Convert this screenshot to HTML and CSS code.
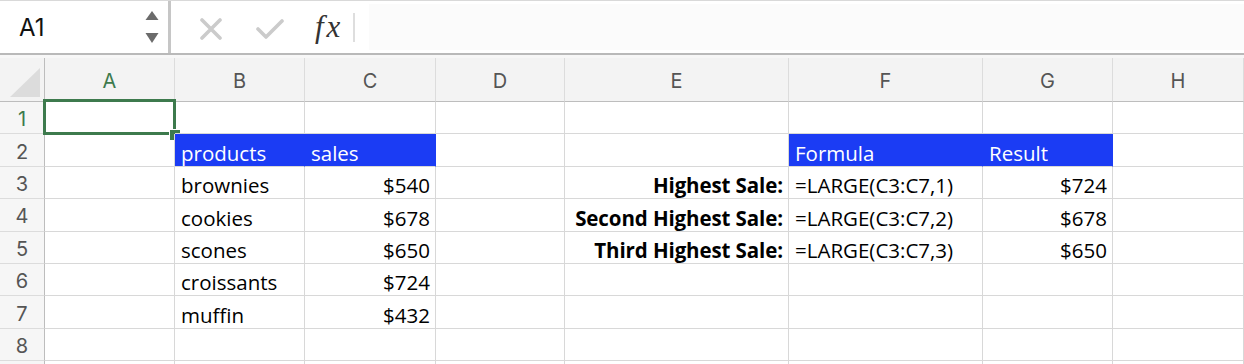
FILE: index.html
```html
<!DOCTYPE html>
<html lang="en">
<head>
  <meta charset="UTF-8" />
  <title>LARGE function</title>
  <link rel="stylesheet" href="styles.css">
</head>
<body>
  <div class="formula-bar">
    <div class="name-box">
      <span class="ref">A1</span>
      <svg class="spin" width="14" height="34" viewBox="0 0 14 34">
        <polygon points="7,0 13.5,9 0.5,9" fill="#6b6b6b"/>
        <polygon points="0.5,22 13.5,22 7,32" fill="#6b6b6b"/>
      </svg>
    </div>
    <div class="bar-divider"></div>
    <div class="fx-area">
      <svg class="icon-x" width="22" height="22" viewBox="0 0 22 22">
        <path d="M2 2 L20 20 M20 2 L2 20" stroke="#cbcbcb" stroke-width="3.6" stroke-linecap="round"/>
      </svg>
      <svg class="icon-check" width="28" height="22" viewBox="0 0 28 22">
        <path d="M2 11 L10 19 L26 3" stroke="#cbcbcb" stroke-width="3.6" fill="none" stroke-linecap="round" stroke-linejoin="round"/>
      </svg>
      <span class="fx">fx</span>
      <span class="fx-sep"></span>
      <div class="fx-input"></div>
    </div>
  </div>
  <div class="gap"></div>

  <div class="sheet">
    <div class="row head">
      <div class="corner">
        <svg width="44" height="43" viewBox="0 0 44 43"><polygon points="10,39 40,39 40,10" fill="#dcdcdc"/></svg>
      </div>
      <div class="col-h sel">A</div>
      <div class="col-h">B</div>
      <div class="col-h">C</div>
      <div class="col-h">D</div>
      <div class="col-h">E</div>
      <div class="col-h">F</div>
      <div class="col-h">G</div>
      <div class="col-h">H</div>
    </div>

    <div class="row">
      <div class="row-h sel">1</div>
      <div class="cell active"><div class="selection"></div><div class="handle"></div></div>
      <div class="cell"></div><div class="cell"></div><div class="cell"></div>
      <div class="cell"></div><div class="cell"></div><div class="cell"></div><div class="cell"></div>
    </div>

    <div class="row">
      <div class="row-h">2</div>
      <div class="cell"></div>
      <div class="cell hd">products</div>
      <div class="cell hd">sales</div>
      <div class="cell"></div>
      <div class="cell"></div>
      <div class="cell hd">Formula</div>
      <div class="cell hd">Result</div>
      <div class="cell"></div>
    </div>

    <div class="row">
      <div class="row-h">3</div>
      <div class="cell"></div>
      <div class="cell">brownies</div>
      <div class="cell num">$540</div>
      <div class="cell"></div>
      <div class="cell lbl">Highest Sale:</div>
      <div class="cell">=LARGE(C3:C7,1)</div>
      <div class="cell num">$724</div>
      <div class="cell"></div>
    </div>

    <div class="row">
      <div class="row-h">4</div>
      <div class="cell"></div>
      <div class="cell">cookies</div>
      <div class="cell num">$678</div>
      <div class="cell"></div>
      <div class="cell lbl">Second Highest Sale:</div>
      <div class="cell">=LARGE(C3:C7,2)</div>
      <div class="cell num">$678</div>
      <div class="cell"></div>
    </div>

    <div class="row">
      <div class="row-h">5</div>
      <div class="cell"></div>
      <div class="cell">scones</div>
      <div class="cell num">$650</div>
      <div class="cell"></div>
      <div class="cell lbl">Third Highest Sale:</div>
      <div class="cell">=LARGE(C3:C7,3)</div>
      <div class="cell num">$650</div>
      <div class="cell"></div>
    </div>

    <div class="row">
      <div class="row-h">6</div>
      <div class="cell"></div>
      <div class="cell">croissants</div>
      <div class="cell num">$724</div>
      <div class="cell"></div><div class="cell"></div><div class="cell"></div>
      <div class="cell"></div><div class="cell"></div>
    </div>

    <div class="row">
      <div class="row-h">7</div>
      <div class="cell"></div>
      <div class="cell">muffin</div>
      <div class="cell num">$432</div>
      <div class="cell"></div><div class="cell"></div><div class="cell"></div>
      <div class="cell"></div><div class="cell"></div>
    </div>

    <div class="row">
      <div class="row-h">8</div>
      <div class="cell"></div><div class="cell"></div><div class="cell"></div><div class="cell"></div>
      <div class="cell"></div><div class="cell"></div><div class="cell"></div><div class="cell"></div>
    </div>

    <div class="row">
      <div class="row-h"></div>
      <div class="cell"></div><div class="cell"></div><div class="cell"></div><div class="cell"></div>
      <div class="cell"></div><div class="cell"></div><div class="cell"></div><div class="cell"></div>
    </div>
  </div>
</body>
</html>
```

FILE: styles.css
```css
* {
  box-sizing: border-box;
}
body {
  margin: 0;
  width: 1244px;
  height: 364px;
  overflow: hidden;
  background: #fff;
  font-family: "Open Sans", sans-serif;
}

/* formula bar */
.formula-bar {
  display: flex;
  height: 55px;
  border-top: 1px solid #d9d9d9;
  border-bottom: 2px solid #b9b9b9;
}
.name-box {
  width: 168px;
  display: flex;
  align-items: center;
  justify-content: space-between;
  padding: 0 9px 0 19px;
  background: #fff;
}
.ref {
  font-family: Inter, sans-serif;
  font-size: 24px;
  color: #111;
  padding-top: 1px;
}
.spin {
  margin-top: 2px;
}
.bar-divider {
  width: 3px;
  background: #c6c6c6;
}
.fx-area {
  flex: 1;
  display: flex;
  align-items: center;
  background: #fff;
}
.icon-x {
  margin-left: 29px;
  margin-top: 4px;
}
.icon-check {
  margin-left: 34px;
  margin-top: 4px;
}
.fx {
  margin-left: 31px;
  font-family: "Liberation Serif", serif;
  font-style: italic;
  font-size: 31px;
  color: #333;
  letter-spacing: 3px;
}
.fx-sep {
  width: 2px;
  height: 29px;
  background: #dedede;
  margin-left: 10px;
}
.fx-input {
  flex: 1;
  align-self: stretch;
  margin: 3px 0 3px 14px;
  background: #fbfbfb;
}
.gap {
  height: 3px;
  background: #f7f7f7;
}

/* grid */
.row {
  display: grid;
  grid-template-columns: 45px 130px 130px 131px 129px 224px 194px 130px 131px;
  height: 32.4px;
}
.row.head {
  height: 44px;
}
.corner {
  background: #f3f3f3;
  border-right: 1px solid #bdbdbd;
  border-bottom: 1px solid #bdbdbd;
}
.corner svg {
  display: block;
}
.col-h {
  background: #f3f3f3;
  border-right: 1px solid #dcdcdc;
  border-bottom: 1px solid #bdbdbd;
  display: flex;
  align-items: center;
  justify-content: center;
  padding-top: 3px;
  font-family: Inter, sans-serif;
  font-size: 20px;
  color: #555;
}
.row-h {
  background: #f6f6f6;
  border-right: 1px solid #bdbdbd;
  border-bottom: 1px solid #dcdcdc;
  display: flex;
  align-items: center;
  justify-content: center;
  padding-top: 3px;
  font-family: Inter, sans-serif;
  font-size: 20px;
  color: #555;
}
.sel {
  color: #3d7a4d;
}
.cell {
  position: relative;
  border-right: 1px solid #d8d8d8;
  border-bottom: 1px solid #d8d8d8;
  display: flex;
  align-items: flex-end;
  padding: 0 5px 1px 6px;
  font-size: 20.5px;
  line-height: 23px;
  color: #000;
  white-space: nowrap;
}
.cell.num {
  justify-content: flex-end;
}
.cell.lbl {
  justify-content: flex-end;
  font-weight: 700;
  letter-spacing: -0.1px;
}
.cell.hd {
  background: #1b3cf4;
  border-right-color: #1b3cf4;
  color: #fff;
}
.selection {
  position: absolute;
  left: -2px;
  top: -3px;
  right: -2px;
  bottom: -2px;
  border: 3px solid #3d7a4d;
}
.handle {
  position: absolute;
  right: -7px;
  bottom: -8px;
  width: 12px;
  height: 12px;
  background: #3d7a4d;
  border: 1px solid #fff;
}
```
